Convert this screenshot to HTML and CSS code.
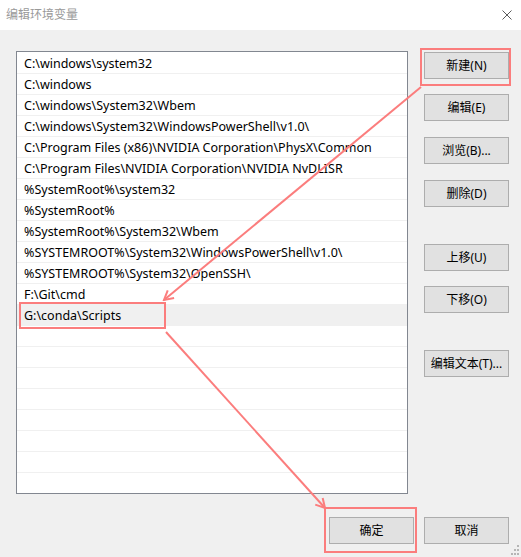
FILE: index.html
```html
<!DOCTYPE html>
<html>
<head lang="zh">
    <meta charset="UTF-8">
    <title>编辑环境变量</title>
    <link rel="stylesheet" href="styles.css">
</head>
<body>
<div class="dlg">
    <div class="title-bar">
        <span class="title">编辑环境变量</span>
        <svg class="close" width="10" height="10" viewBox="0 0 10 10">
            <path d="M0.5 0.5 L9.5 9.5 M9.5 0.5 L0.5 9.5" stroke="#5a5a5a" stroke-width="1" fill="none"/>
        </svg>
    </div>
    <div class="main">
        <ul class="list">
            <li>C:\windows\system32</li>
            <li>C:\windows</li>
            <li>C:\windows\System32\Wbem</li>
            <li>C:\windows\System32\WindowsPowerShell\v1.0\</li>
            <li>C:\Program Files (x86)\NVIDIA Corporation\PhysX\Common</li>
            <li>C:\Program Files\NVIDIA Corporation\NVIDIA NvDLISR</li>
            <li>%SystemRoot%\system32</li>
            <li>%SystemRoot%</li>
            <li>%SystemRoot%\System32\Wbem</li>
            <li>%SYSTEMROOT%\System32\WindowsPowerShell\v1.0\</li>
            <li>%SYSTEMROOT%\System32\OpenSSH\</li>
            <li>F:\Git\cmd</li>
            <li class="sel">G:\conda\Scripts</li>
            <li></li>
            <li></li>
            <li></li>
            <li></li>
            <li></li>
            <li></li>
            <li></li>
            <li></li>
        </ul>
        <div class="side">
            <a class="btn" href="javascript:;">新建(N)</a>
            <a class="btn" href="javascript:;">编辑(E)</a>
            <a class="btn" href="javascript:;">浏览(B)...</a>
            <a class="btn" href="javascript:;">删除(D)</a>
            <a class="btn gap" href="javascript:;">上移(U)</a>
            <a class="btn" href="javascript:;">下移(O)</a>
            <a class="btn gap" href="javascript:;">编辑文本(T)...</a>
        </div>
    </div>
    <div class="foot">
        <a class="btn" href="javascript:;">确定</a>
        <a class="btn" href="javascript:;">取消</a>
    </div>
</div>
<!-- 标注 -->
<svg class="marks" width="521" height="557" viewBox="0 0 521 557">
    <defs>
        <marker id="head" markerWidth="12" markerHeight="12" refX="10" refY="6" orient="auto" markerUnits="userSpaceOnUse">
            <path d="M1 1 L10 6 L1 11" stroke="#fb7d7d" stroke-width="2" fill="none"/>
        </marker>
    </defs>
    <g stroke="#fb7d7d" stroke-width="2" fill="none">
        <rect x="421" y="49" width="89" height="36"/>
        <rect x="20" y="303" width="145" height="25"/>
        <rect x="325" y="508" width="91" height="44"/>
        <line x1="421" y1="87" x2="164" y2="300" marker-end="url(#head)"/>
        <line x1="166" y1="332" x2="325" y2="508" marker-end="url(#head)"/>
    </g>
    <g fill="#b5b5b5">
        <rect x="517" y="545" width="2" height="2"/>
        <rect x="514" y="549" width="2" height="2"/>
        <rect x="517" y="549" width="2" height="2"/>
        <rect x="511" y="553" width="2" height="2"/>
        <rect x="514" y="553" width="2" height="2"/>
        <rect x="517" y="553" width="2" height="2"/>
    </g>
</svg>
</body>
</html>
```
FILE: styles.css
```css
body, ul, li {
    margin: 0;
    padding: 0;
}
body {
    width: 521px;
    height: 557px;
    overflow: hidden;
    background: #f0f0f0;
    font: 12px/20px "Noto Sans", "Noto Sans CJK SC", sans-serif;
    color: #000;
    position: relative;
}
.title-bar {
    height: 30px;
    background: #fff;
    display: flex;
    align-items: center;
    justify-content: space-between;
    padding: 0 9px 0 6px;
}
.title {
    color: #999;
    font-size: 12px;
}
.close {
    display: block;
}
.main {
    display: flex;
    padding: 21px 0 0 16px;
}
.list {
    list-style-type: none;
    width: 390px;
    height: 440px;
    border: 1px solid #828790;
    background: #fff;
    overflow: hidden;
    padding-top: 1px;
    box-sizing: content-box;
}
.list li {
    height: 19px;
    line-height: 19px;
    padding: 1px 0 0 7px;
    font-size: 12.5px;
    border-bottom: 1px solid #f0f0f0;
    white-space: nowrap;
}
.list li.sel {
    background: #f0f0f0;
}
.side {
    display: flex;
    flex-direction: column;
    margin-left: 16px;
    padding-top: 1px;
    gap: 16px;
}
.side .btn:nth-child(2),
.side .btn:nth-child(6) {
    margin-top: -1px;
}
.side .gap {
    margin-top: 21px;
}
.btn {
    display: block;
    width: 83px;
    height: 25px;
    line-height: 25px;
    border: 1px solid #adadad;
    background: #e1e1e1;
    color: #000;
    text-align: center;
    text-decoration: none;
    font-size: 12px;
}
.foot {
    display: flex;
    justify-content: flex-end;
    gap: 10px;
    padding: 23px 12px 0 0;
}
.marks {
    position: absolute;
    left: 0;
    top: 0;
    pointer-events: none;
}
```
